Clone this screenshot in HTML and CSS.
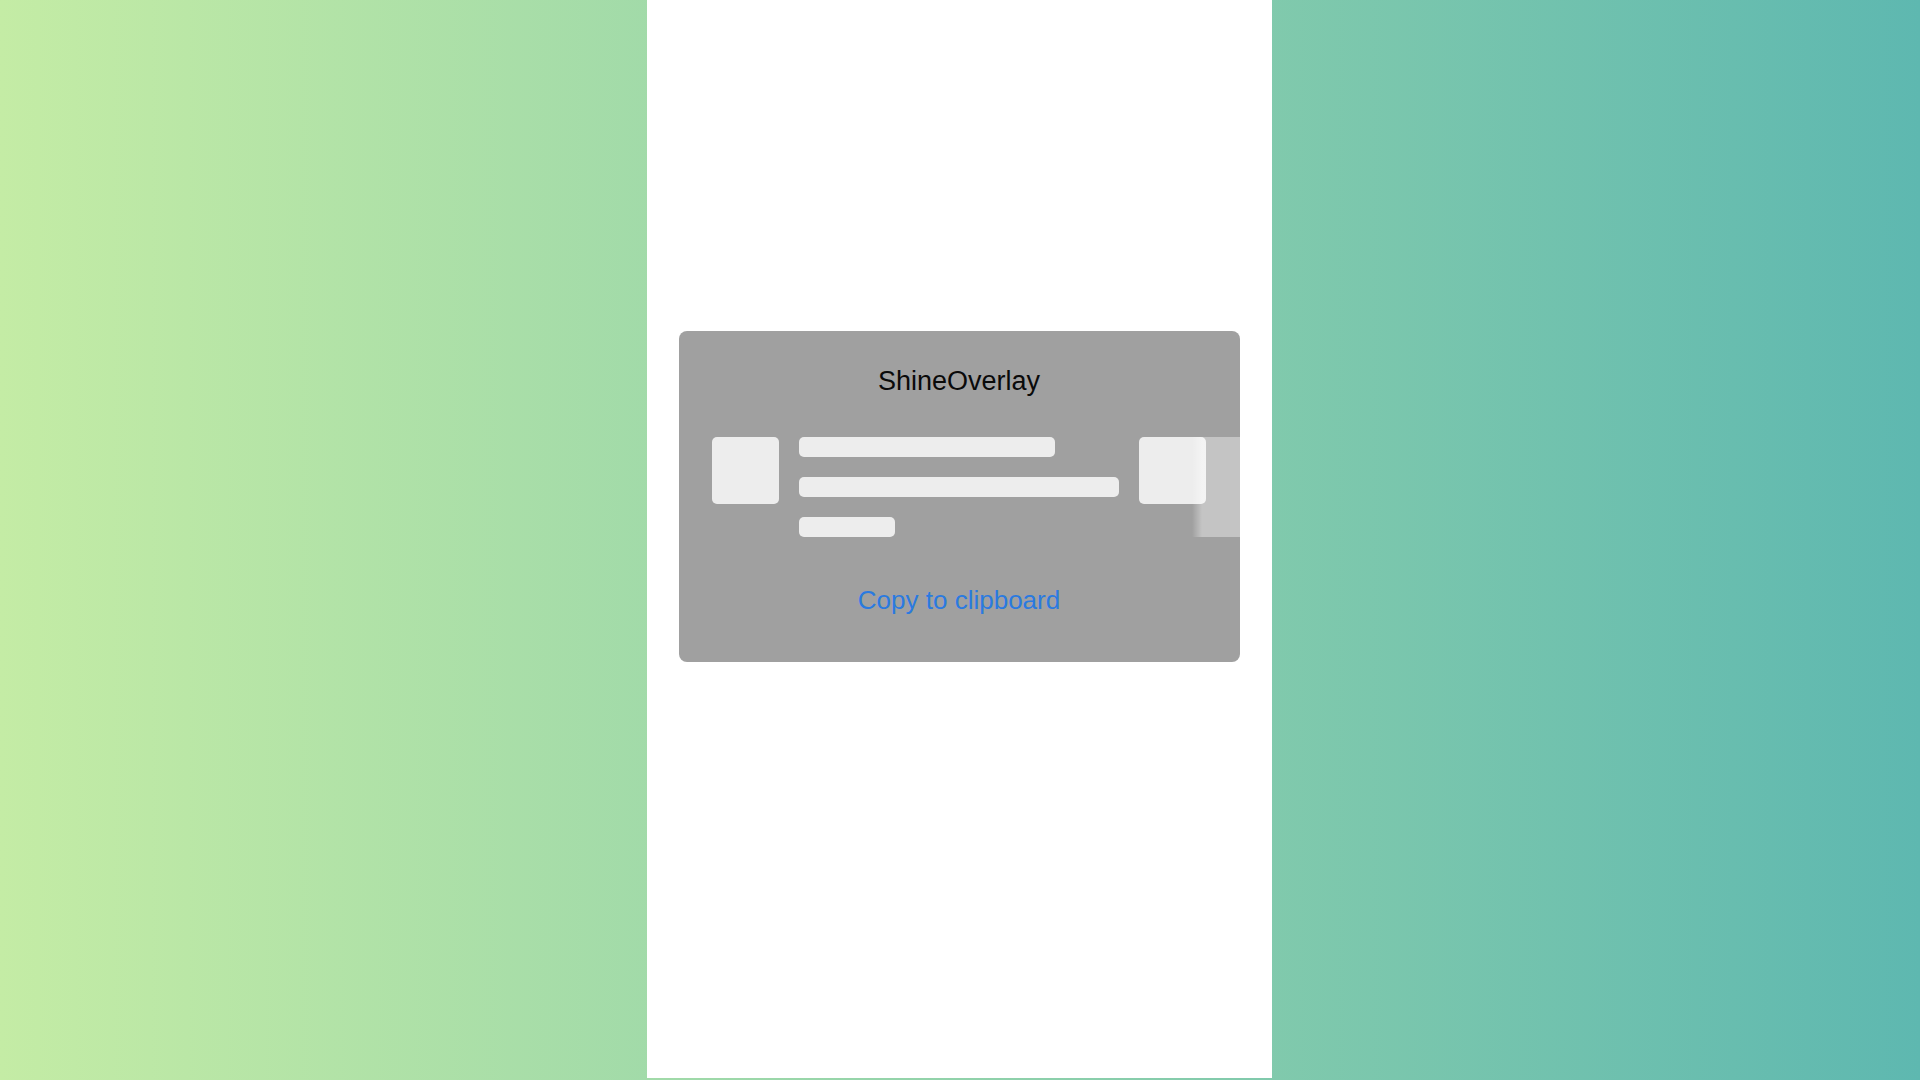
FILE: index.html
```html
<!DOCTYPE html>
<html lang="en">
<head>
<meta charset="utf-8">
<title>ShineOverlay</title>
<link rel="stylesheet" href="styles.css">
</head>
<body>
  <main class="screen">
    <section class="card">
      <h1 class="title">ShineOverlay</h1>
      <div class="row">
        <div class="thumb"></div>
        <div class="lines">
          <div class="line line-a"></div>
          <div class="line line-b"></div>
          <div class="line line-c"></div>
        </div>
        <div class="thumb"></div>
        <div class="shine"></div>
      </div>
      <div class="action">Copy to clipboard</div>
    </section>
  </main>
</body>
</html>
```

FILE: styles.css
```css
html, body {
  margin: 0;
  padding: 0;
  height: 100%;
}

body {
  background: linear-gradient(to right, #c4eca5 0%, #5eb8b0 100%);
  display: flex;
  justify-content: flex-start;
  align-items: flex-start;
  padding-left: 647px;
  box-sizing: border-box;
  font-family: "Liberation Sans", Arial, sans-serif;
  overflow: hidden;
}

.screen {
  width: 625px;
  height: 1078px;
  background: #ffffff;
  box-sizing: border-box;
  padding: 331px 32px 0;
}

.card {
  background: #a0a0a0;
  border-radius: 8px;
  overflow: hidden;
  padding: 34px 34px 46px 33px;
  display: flex;
  flex-direction: column;
  align-items: stretch;
}

.title {
  margin: 0;
  font-size: 27px;
  line-height: 32px;
  font-weight: 400;
  color: #0a0a0a;
  text-align: center;
}

.row {
  position: relative;
  margin-top: 40px;
  display: flex;
  gap: 20px;
  align-items: flex-start;
}

.thumb {
  width: 67px;
  height: 67px;
  flex: 0 0 67px;
  background: #ededed;
  border-radius: 5px;
}

.lines {
  flex: 1 1 auto;
  display: flex;
  flex-direction: column;
  gap: 20px;
}

.line {
  height: 20px;
  background: #ededed;
  border-radius: 5px;
}

.line-a { width: 256px; }
.line-b { width: 100%; }
.line-c { width: 96px; }

.shine {
  position: absolute;
  top: 0;
  bottom: 0;
  left: 480px;
  width: 80px;
  background: linear-gradient(to right, rgba(255,255,255,0) 0px, rgba(255,255,255,0.38) 10px, rgba(255,255,255,0.38) 100%);
}

.action {
  margin-top: 47px;
  font-size: 26px;
  line-height: 32px;
  color: #2a7ae0;
  text-align: center;
}
```
